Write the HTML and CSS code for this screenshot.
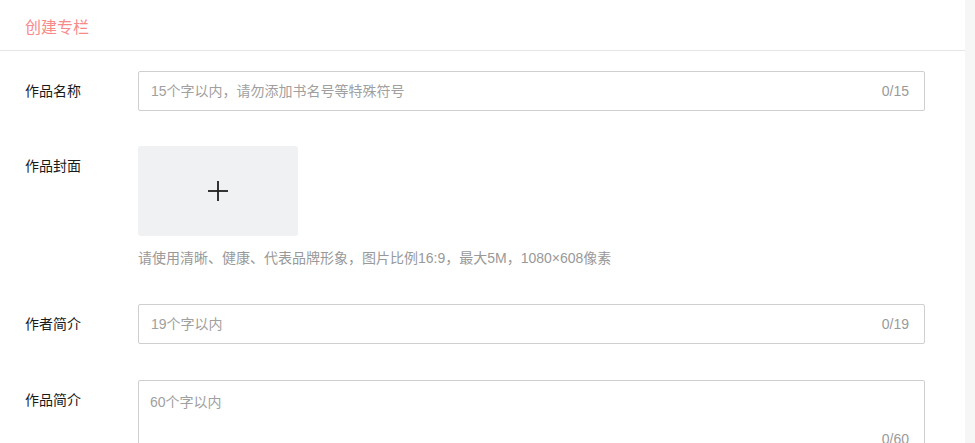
FILE: index.html
```html
<!DOCTYPE html>
<html lang="zh-CN">
<head>
<meta charset="utf-8">
<title>创建专栏</title>
<link rel="stylesheet" href="styles.css">
</head>
<body>
<div class="page">
  <main class="main">
    <header class="header">
      <h1 class="title">创建专栏</h1>
    </header>
    <form class="form">
      <div class="row">
        <label class="label">作品名称</label>
        <div class="field input">
          <span class="placeholder">15个字以内，请勿添加书名号等特殊符号</span>
          <span class="count">0/15</span>
        </div>
      </div>
      <div class="row row-cover">
        <label class="label">作品封面</label>
        <div class="cover-col">
          <div class="cover">
            <svg width="20" height="20" viewBox="0 0 20 20" aria-hidden="true">
              <line x1="0" y1="10" x2="20" y2="10" stroke="#1f1f1f" stroke-width="1.8"/>
              <line x1="10" y1="0" x2="10" y2="20" stroke="#1f1f1f" stroke-width="1.8"/>
            </svg>
          </div>
          <p class="hint">请使用清晰、健康、代表品牌形象，图片比例16:9，最大5M，1080×608像素</p>
        </div>
      </div>
      <div class="row">
        <label class="label">作者简介</label>
        <div class="field input">
          <span class="placeholder">19个字以内</span>
          <span class="count">0/19</span>
        </div>
      </div>
      <div class="row">
        <label class="label">作品简介</label>
        <div class="field textarea">
          <span class="placeholder">60个字以内</span>
          <span class="count count-bottom">0/60</span>
        </div>
      </div>
    </form>
  </main>
  <div class="track"></div>
</div>
</body>
</html>
```
FILE: styles.css
```css
html, body {
  margin: 0;
  padding: 0;
  height: 100%;
  overflow: hidden;
  background: #fff;
}
body {
  font-family: "Liberation Sans", "Noto Sans CJK SC", sans-serif;
  font-size: 14px;
  color: #222;
}
.page {
  display: flex;
  height: 100%;
}
.main {
  width: 965px;
  flex: none;
}
.track {
  flex: 1;
  background: #f6f6f6;
}
.header {
  height: 50px;
  border-bottom: 1px solid #e6e6e6;
  box-sizing: content-box;
  padding-left: 25px;
}
.title {
  margin: 0;
  padding-top: 18px;
  font-size: 16px;
  line-height: 20px;
  font-weight: normal;
  color: #f88a8a;
}
.form {
  padding: 20px 40px 0 25px;
  display: flex;
  flex-direction: column;
  gap: 36px;
}
.row {
  display: flex;
  align-items: flex-start;
}
.row-cover {
  margin-top: -1px;
}
.label {
  width: 113px;
  flex: none;
  line-height: 40px;
  font-size: 14px;
  color: #1a1a1a;
}
.field {
  flex: 1;
  position: relative;
  box-sizing: border-box;
  border: 1px solid #cfcfcf;
  border-radius: 2px;
  color: #a0a0a0;
  line-height: 20px;
}
.input {
  height: 40px;
  display: flex;
  align-items: center;
  justify-content: space-between;
  padding: 0 15px 0 12px;
}
.textarea {
  height: 80px;
  padding: 11px 15px 0 11px;
}
.count {
  color: #9a9a9a;
}
.count-bottom {
  position: absolute;
  right: 15px;
  bottom: 10px;
}
.cover-col {
  display: flex;
  flex-direction: column;
  gap: 12px;
}
.cover {
  width: 160px;
  height: 90px;
  background: #f0f1f3;
  border-radius: 3px;
  display: flex;
  align-items: center;
  justify-content: center;
}
.hint {
  margin: 0;
  line-height: 20px;
  color: #999;
  font-size: 14px;
}
```
